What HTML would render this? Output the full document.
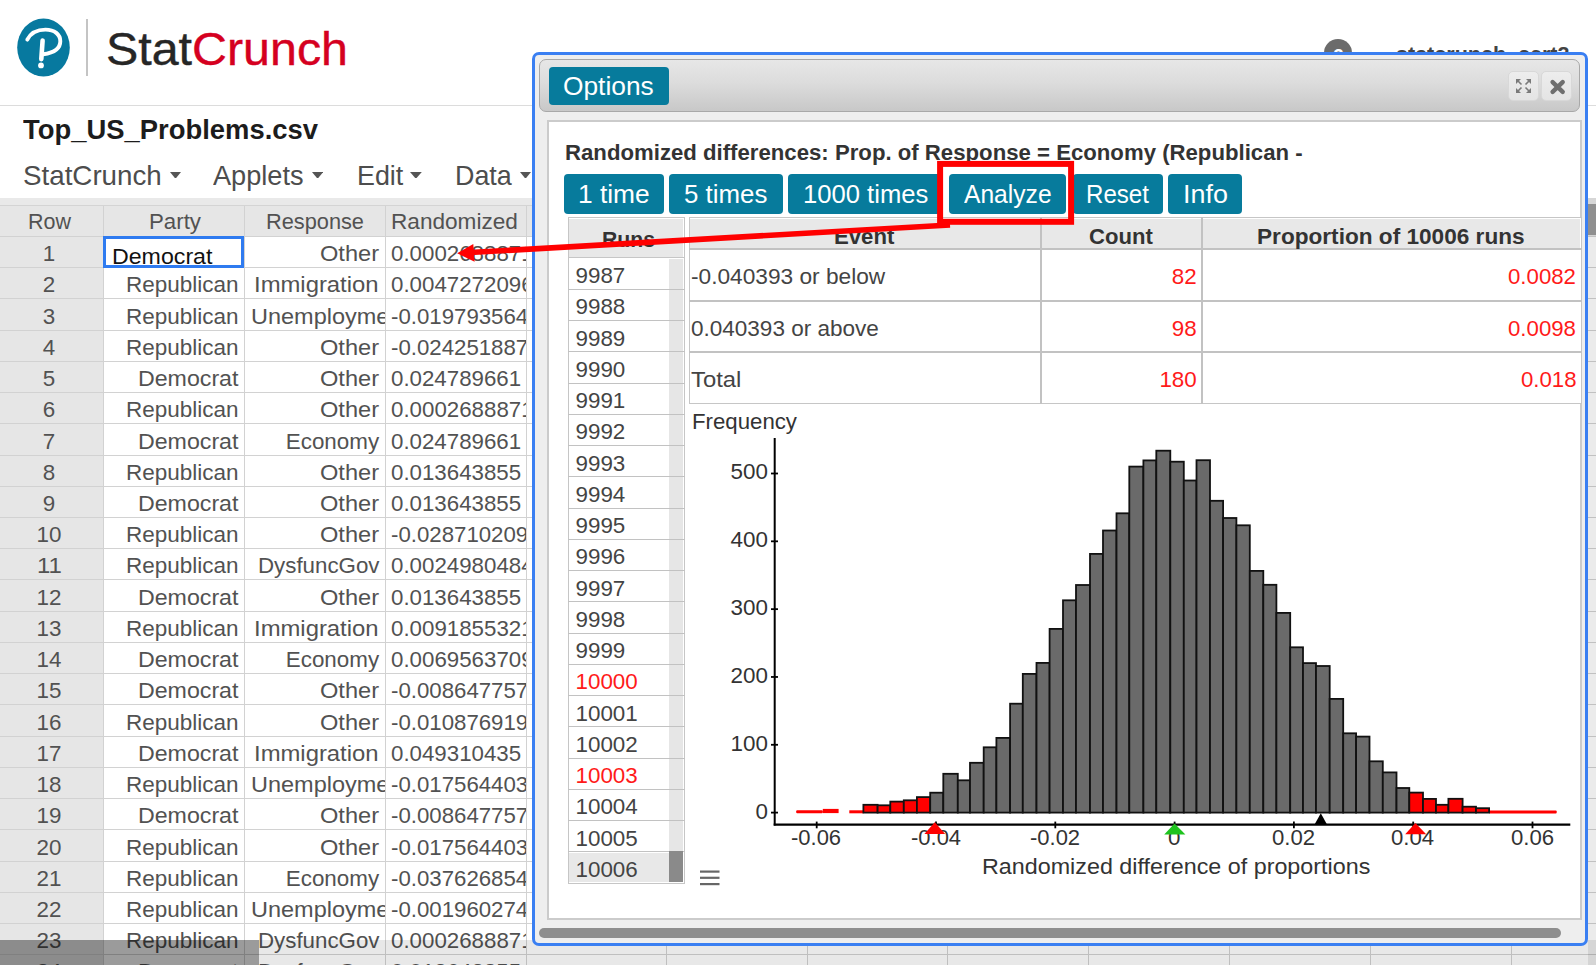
<!DOCTYPE html>
<html><head><meta charset="utf-8"><title>StatCrunch</title>
<style>
html,body{margin:0;padding:0;background:#fff;}
body{width:1596px;height:965px;overflow:hidden;position:relative;font-family:"Liberation Sans",sans-serif;}
.t{position:absolute;white-space:nowrap;line-height:1;}
.b{position:absolute;}
.clip{position:absolute;overflow:hidden;}
</style></head><body>
<svg class="b" style="left:0;top:0" width="100" height="100" viewBox="0 0 100 100">
<ellipse cx="43.5" cy="47.5" rx="26.3" ry="29" fill="#07799f"/>
<path d="M27.3,39.6 C30.5,33.5 37,29.6 45.5,29.6 C54.5,29.6 60.3,34.4 60.3,41.2 C60.3,48.4 53.5,52.8 43.2,54.2" fill="none" stroke="#fff" stroke-width="3.9" stroke-linecap="round"/>
<path d="M42.6,40.6 L41.3,59.2" fill="none" stroke="#fff" stroke-width="4.6" stroke-linecap="round"/>
<circle cx="41" cy="65.4" r="2.9" fill="#fff"/>
</svg>
<div class="b" style="left:86.00px;top:19.00px;width:1.50px;height:57.00px;background:#c4c4c4"></div>
<div class="t" style="left:105.5px;top:25.84px;font-size:46.5px;transform:scaleX(1.0403);transform-origin:0 0;color:#262626;-webkit-text-stroke:0.4px currentColor">Stat<span style="color:#d5001f">Crunch</span></div>
<div class="b" style="left:1324px;top:39px;width:28px;height:28px;border-radius:50%;background:#6b6b6b"></div>
<div class="t " style="left:1332.63px;top:45.42px;font-size:21.0px;color:#fff;font-weight:bold;transform:scaleX(0.8374);transform-origin:0 0;">?</div>
<div class="t " style="left:1395.50px;top:43.42px;font-size:21.0px;color:#444;font-weight:bold;transform:scaleX(1.0251);transform-origin:0 0;">statcrunch_cert2</div>
<div class="b" style="left:0.00px;top:104.80px;width:1596.00px;height:1.20px;background:#dcdcdc"></div>
<div class="t " style="left:22.80px;top:115.80px;font-size:28.0px;color:#1c1c1c;font-weight:bold;transform:scaleX(0.9789);transform-origin:0 0;">Top_US_Problems.csv</div>
<div class="t " style="left:22.80px;top:162.09px;font-size:27.3px;color:#4d4d4d;transform:scaleX(1.0163);transform-origin:0 0;">StatCrunch</div>
<svg class="b" style="left:170.00px;top:171.50px" width="11.00" height="6.80" viewBox="0 0 11.00 6.80"><polygon points="0,0 11.00,0 5.50,6.80" fill="#555"/></svg>
<div class="t " style="left:213.40px;top:162.09px;font-size:27.3px;color:#4d4d4d;transform:scaleX(0.9951);transform-origin:0 0;">Applets</div>
<svg class="b" style="left:312.00px;top:171.50px" width="11.20" height="6.80" viewBox="0 0 11.20 6.80"><polygon points="0,0 11.20,0 5.60,6.80" fill="#555"/></svg>
<div class="t " style="left:357.00px;top:162.09px;font-size:27.3px;color:#4d4d4d;transform:scaleX(0.9846);transform-origin:0 0;">Edit</div>
<svg class="b" style="left:410.00px;top:171.50px" width="11.80" height="6.80" viewBox="0 0 11.80 6.80"><polygon points="0,0 11.80,0 5.90,6.80" fill="#555"/></svg>
<div class="t " style="left:454.80px;top:162.09px;font-size:27.3px;color:#4d4d4d;transform:scaleX(0.9849);transform-origin:0 0;">Data</div>
<svg class="b" style="left:519.50px;top:171.50px" width="11.00" height="6.80" viewBox="0 0 11.00 6.80"><polygon points="0,0 11.00,0 5.50,6.80" fill="#555"/></svg>
<div class="b" style="left:0.00px;top:198.00px;width:1596.00px;height:7.00px;background:#e9e9e9"></div>
<div class="b" style="left:0.00px;top:204.60px;width:1596.00px;height:1.20px;background:#d4d4d4"></div>
<div class="b" style="left:0.00px;top:205.80px;width:1596.00px;height:30.20px;background:#e6e6e6"></div>
<div class="b" style="left:0.00px;top:235.80px;width:1596.00px;height:1.20px;background:#d2d2d2"></div>
<div class="b" style="left:0.00px;top:237.00px;width:1596.00px;height:728.00px;background:#fff"></div>
<div class="b" style="left:0.00px;top:237.00px;width:103.50px;height:728.00px;background:#e6e6e6"></div>
<div class="b" style="left:103.00px;top:205.80px;width:1.00px;height:759.20px;background:#d2d2d2"></div>
<div class="b" style="left:244.00px;top:205.80px;width:1.00px;height:759.20px;background:#d2d2d2"></div>
<div class="b" style="left:385.00px;top:205.80px;width:1.00px;height:759.20px;background:#d2d2d2"></div>
<div class="b" style="left:526.00px;top:205.80px;width:1.00px;height:759.20px;background:#d2d2d2"></div>
<div class="b" style="left:666.00px;top:205.80px;width:1.00px;height:759.20px;background:#d2d2d2"></div>
<div class="b" style="left:807.00px;top:205.80px;width:1.00px;height:759.20px;background:#d2d2d2"></div>
<div class="b" style="left:947.00px;top:205.80px;width:1.00px;height:759.20px;background:#d2d2d2"></div>
<div class="b" style="left:1088.00px;top:205.80px;width:1.00px;height:759.20px;background:#d2d2d2"></div>
<div class="b" style="left:1229.00px;top:205.80px;width:1.00px;height:759.20px;background:#d2d2d2"></div>
<div class="b" style="left:1370.00px;top:205.80px;width:1.00px;height:759.20px;background:#d2d2d2"></div>
<div class="b" style="left:1511.00px;top:205.80px;width:1.00px;height:759.20px;background:#d2d2d2"></div>
<div class="b" style="left:0.00px;top:267.00px;width:1596.00px;height:1.00px;background:#d2d2d2"></div>
<div class="b" style="left:0.00px;top:298.00px;width:1596.00px;height:1.00px;background:#d2d2d2"></div>
<div class="b" style="left:0.00px;top:330.00px;width:1596.00px;height:1.00px;background:#d2d2d2"></div>
<div class="b" style="left:0.00px;top:361.00px;width:1596.00px;height:1.00px;background:#d2d2d2"></div>
<div class="b" style="left:0.00px;top:392.00px;width:1596.00px;height:1.00px;background:#d2d2d2"></div>
<div class="b" style="left:0.00px;top:423.00px;width:1596.00px;height:1.00px;background:#d2d2d2"></div>
<div class="b" style="left:0.00px;top:455.00px;width:1596.00px;height:1.00px;background:#d2d2d2"></div>
<div class="b" style="left:0.00px;top:486.00px;width:1596.00px;height:1.00px;background:#d2d2d2"></div>
<div class="b" style="left:0.00px;top:517.00px;width:1596.00px;height:1.00px;background:#d2d2d2"></div>
<div class="b" style="left:0.00px;top:548.00px;width:1596.00px;height:1.00px;background:#d2d2d2"></div>
<div class="b" style="left:0.00px;top:579.00px;width:1596.00px;height:1.00px;background:#d2d2d2"></div>
<div class="b" style="left:0.00px;top:611.00px;width:1596.00px;height:1.00px;background:#d2d2d2"></div>
<div class="b" style="left:0.00px;top:642.00px;width:1596.00px;height:1.00px;background:#d2d2d2"></div>
<div class="b" style="left:0.00px;top:673.00px;width:1596.00px;height:1.00px;background:#d2d2d2"></div>
<div class="b" style="left:0.00px;top:704.00px;width:1596.00px;height:1.00px;background:#d2d2d2"></div>
<div class="b" style="left:0.00px;top:736.00px;width:1596.00px;height:1.00px;background:#d2d2d2"></div>
<div class="b" style="left:0.00px;top:767.00px;width:1596.00px;height:1.00px;background:#d2d2d2"></div>
<div class="b" style="left:0.00px;top:798.00px;width:1596.00px;height:1.00px;background:#d2d2d2"></div>
<div class="b" style="left:0.00px;top:829.00px;width:1596.00px;height:1.00px;background:#d2d2d2"></div>
<div class="b" style="left:0.00px;top:861.00px;width:1596.00px;height:1.00px;background:#d2d2d2"></div>
<div class="b" style="left:0.00px;top:892.00px;width:1596.00px;height:1.00px;background:#d2d2d2"></div>
<div class="b" style="left:0.00px;top:923.00px;width:1596.00px;height:1.00px;background:#d2d2d2"></div>
<div class="b" style="left:0.00px;top:954.00px;width:1596.00px;height:1.00px;background:#d2d2d2"></div>
<div class="b" style="left:0.00px;top:985.00px;width:1596.00px;height:1.00px;background:#d2d2d2"></div>
<div class="t " style="left:27.50px;top:211.24px;font-size:22.4px;color:#525252;transform:scaleX(0.9586);transform-origin:0 0;">Row</div>
<div class="t " style="left:149.00px;top:211.24px;font-size:22.4px;color:#525252;transform:scaleX(0.9942);transform-origin:0 0;">Party</div>
<div class="t " style="left:265.60px;top:211.24px;font-size:22.4px;color:#525252;transform:scaleX(0.9717);transform-origin:0 0;">Response</div>
<div class="clip" style="left:386px;top:206px;width:139.5px;height:30px">
<div class="t " style="left:5.40px;top:5.24px;font-size:22.4px;color:#525252;transform:scaleX(1.0097);transform-origin:0 0;">Randomized</div>
</div>
<div class="t " style="left:42.78px;top:243.14px;font-size:22.4px;color:#525252;">1</div>
<div class="clip" style="left:245px;top:237.40px;width:140px;height:29.73px">
<div class="t " style="left:74.93px;top:5.74px;font-size:22.4px;color:#525252;transform:scaleX(1.0543);transform-origin:0 0;">Other</div>
</div>
<div class="clip" style="left:386px;top:237.40px;width:139.5px;height:29.73px">
<div class="t " style="left:5.40px;top:5.74px;font-size:22.4px;color:#525252;transform:scaleX(0.9956);transform-origin:0 0;">0.0002688871</div>
</div>
<div class="t " style="left:42.78px;top:274.37px;font-size:22.4px;color:#525252;">2</div>
<div class="t " style="left:126.31px;top:274.37px;font-size:22.4px;color:#525252;transform:scaleX(1.0037);transform-origin:0 0;">Republican</div>
<div class="clip" style="left:245px;top:268.63px;width:140px;height:29.73px">
<div class="t " style="left:9.38px;top:5.74px;font-size:22.4px;color:#525252;transform:scaleX(1.0650);transform-origin:0 0;">Immigration</div>
</div>
<div class="clip" style="left:386px;top:268.63px;width:139.5px;height:29.73px">
<div class="t " style="left:5.40px;top:5.74px;font-size:22.4px;color:#525252;transform:scaleX(0.9956);transform-origin:0 0;">0.0047272096</div>
</div>
<div class="t " style="left:42.78px;top:305.60px;font-size:22.4px;color:#525252;">3</div>
<div class="t " style="left:126.31px;top:305.60px;font-size:22.4px;color:#525252;transform:scaleX(1.0037);transform-origin:0 0;">Republican</div>
<div class="clip" style="left:245px;top:299.86px;width:140px;height:29.73px">
<div class="t " style="left:5.50px;top:5.74px;font-size:22.4px;color:#525252;transform:scaleX(1.0489);transform-origin:0 0;">Unemployment</div>
</div>
<div class="clip" style="left:386px;top:299.86px;width:139.5px;height:29.73px">
<div class="t " style="left:5.40px;top:5.74px;font-size:22.4px;color:#525252;transform:scaleX(0.9927);transform-origin:0 0;">-0.0197935641</div>
</div>
<div class="t " style="left:42.78px;top:336.83px;font-size:22.4px;color:#525252;">4</div>
<div class="t " style="left:126.31px;top:336.83px;font-size:22.4px;color:#525252;transform:scaleX(1.0037);transform-origin:0 0;">Republican</div>
<div class="clip" style="left:245px;top:331.09px;width:140px;height:29.73px">
<div class="t " style="left:74.93px;top:5.74px;font-size:22.4px;color:#525252;transform:scaleX(1.0543);transform-origin:0 0;">Other</div>
</div>
<div class="clip" style="left:386px;top:331.09px;width:139.5px;height:29.73px">
<div class="t " style="left:5.40px;top:5.74px;font-size:22.4px;color:#525252;transform:scaleX(0.9927);transform-origin:0 0;">-0.0242518871</div>
</div>
<div class="t " style="left:42.78px;top:368.06px;font-size:22.4px;color:#525252;">5</div>
<div class="t " style="left:138.34px;top:368.06px;font-size:22.4px;color:#525252;transform:scaleX(1.0347);transform-origin:0 0;">Democrat</div>
<div class="clip" style="left:245px;top:362.32px;width:140px;height:29.73px">
<div class="t " style="left:74.93px;top:5.74px;font-size:22.4px;color:#525252;transform:scaleX(1.0543);transform-origin:0 0;">Other</div>
</div>
<div class="clip" style="left:386px;top:362.32px;width:139.5px;height:29.73px">
<div class="t " style="left:5.40px;top:5.74px;font-size:22.4px;color:#525252;transform:scaleX(0.9953);transform-origin:0 0;">0.024789661</div>
</div>
<div class="t " style="left:42.78px;top:399.29px;font-size:22.4px;color:#525252;">6</div>
<div class="t " style="left:126.31px;top:399.29px;font-size:22.4px;color:#525252;transform:scaleX(1.0037);transform-origin:0 0;">Republican</div>
<div class="clip" style="left:245px;top:393.55px;width:140px;height:29.73px">
<div class="t " style="left:74.93px;top:5.74px;font-size:22.4px;color:#525252;transform:scaleX(1.0543);transform-origin:0 0;">Other</div>
</div>
<div class="clip" style="left:386px;top:393.55px;width:139.5px;height:29.73px">
<div class="t " style="left:5.40px;top:5.74px;font-size:22.4px;color:#525252;transform:scaleX(0.9956);transform-origin:0 0;">0.0002688871</div>
</div>
<div class="t " style="left:42.78px;top:430.52px;font-size:22.4px;color:#525252;">7</div>
<div class="t " style="left:138.34px;top:430.52px;font-size:22.4px;color:#525252;transform:scaleX(1.0347);transform-origin:0 0;">Democrat</div>
<div class="clip" style="left:245px;top:424.78px;width:140px;height:29.73px">
<div class="t " style="left:40.75px;top:5.74px;font-size:22.4px;color:#525252;">Economy</div>
</div>
<div class="clip" style="left:386px;top:424.78px;width:139.5px;height:29.73px">
<div class="t " style="left:5.40px;top:5.74px;font-size:22.4px;color:#525252;transform:scaleX(0.9953);transform-origin:0 0;">0.024789661</div>
</div>
<div class="t " style="left:42.78px;top:461.75px;font-size:22.4px;color:#525252;">8</div>
<div class="t " style="left:126.31px;top:461.75px;font-size:22.4px;color:#525252;transform:scaleX(1.0037);transform-origin:0 0;">Republican</div>
<div class="clip" style="left:245px;top:456.01px;width:140px;height:29.73px">
<div class="t " style="left:74.93px;top:5.74px;font-size:22.4px;color:#525252;transform:scaleX(1.0543);transform-origin:0 0;">Other</div>
</div>
<div class="clip" style="left:386px;top:456.01px;width:139.5px;height:29.73px">
<div class="t " style="left:5.40px;top:5.74px;font-size:22.4px;color:#525252;transform:scaleX(0.9953);transform-origin:0 0;">0.013643855</div>
</div>
<div class="t " style="left:42.78px;top:492.98px;font-size:22.4px;color:#525252;">9</div>
<div class="t " style="left:138.34px;top:492.98px;font-size:22.4px;color:#525252;transform:scaleX(1.0347);transform-origin:0 0;">Democrat</div>
<div class="clip" style="left:245px;top:487.24px;width:140px;height:29.73px">
<div class="t " style="left:74.93px;top:5.74px;font-size:22.4px;color:#525252;transform:scaleX(1.0543);transform-origin:0 0;">Other</div>
</div>
<div class="clip" style="left:386px;top:487.24px;width:139.5px;height:29.73px">
<div class="t " style="left:5.40px;top:5.74px;font-size:22.4px;color:#525252;transform:scaleX(0.9953);transform-origin:0 0;">0.013643855</div>
</div>
<div class="t " style="left:36.56px;top:524.21px;font-size:22.4px;color:#525252;">10</div>
<div class="t " style="left:126.31px;top:524.21px;font-size:22.4px;color:#525252;transform:scaleX(1.0037);transform-origin:0 0;">Republican</div>
<div class="clip" style="left:245px;top:518.47px;width:140px;height:29.73px">
<div class="t " style="left:74.93px;top:5.74px;font-size:22.4px;color:#525252;transform:scaleX(1.0543);transform-origin:0 0;">Other</div>
</div>
<div class="clip" style="left:386px;top:518.47px;width:139.5px;height:29.73px">
<div class="t " style="left:5.40px;top:5.74px;font-size:22.4px;color:#525252;transform:scaleX(0.9927);transform-origin:0 0;">-0.0287102091</div>
</div>
<div class="t " style="left:36.56px;top:555.44px;font-size:22.4px;color:#525252;transform:scaleX(1.0699);transform-origin:0 0;">11</div>
<div class="t " style="left:126.31px;top:555.44px;font-size:22.4px;color:#525252;transform:scaleX(1.0037);transform-origin:0 0;">Republican</div>
<div class="clip" style="left:245px;top:549.70px;width:140px;height:29.73px">
<div class="t " style="left:12.52px;top:5.74px;font-size:22.4px;color:#525252;transform:scaleX(0.9957);transform-origin:0 0;">DysfuncGov</div>
</div>
<div class="clip" style="left:386px;top:549.70px;width:139.5px;height:29.73px">
<div class="t " style="left:5.40px;top:5.74px;font-size:22.4px;color:#525252;transform:scaleX(0.9956);transform-origin:0 0;">0.0024980484</div>
</div>
<div class="t " style="left:36.56px;top:586.67px;font-size:22.4px;color:#525252;">12</div>
<div class="t " style="left:138.34px;top:586.67px;font-size:22.4px;color:#525252;transform:scaleX(1.0347);transform-origin:0 0;">Democrat</div>
<div class="clip" style="left:245px;top:580.93px;width:140px;height:29.73px">
<div class="t " style="left:74.93px;top:5.74px;font-size:22.4px;color:#525252;transform:scaleX(1.0543);transform-origin:0 0;">Other</div>
</div>
<div class="clip" style="left:386px;top:580.93px;width:139.5px;height:29.73px">
<div class="t " style="left:5.40px;top:5.74px;font-size:22.4px;color:#525252;transform:scaleX(0.9953);transform-origin:0 0;">0.013643855</div>
</div>
<div class="t " style="left:36.56px;top:617.90px;font-size:22.4px;color:#525252;">13</div>
<div class="t " style="left:126.31px;top:617.90px;font-size:22.4px;color:#525252;transform:scaleX(1.0037);transform-origin:0 0;">Republican</div>
<div class="clip" style="left:245px;top:612.16px;width:140px;height:29.73px">
<div class="t " style="left:9.38px;top:5.74px;font-size:22.4px;color:#525252;transform:scaleX(1.0650);transform-origin:0 0;">Immigration</div>
</div>
<div class="clip" style="left:386px;top:612.16px;width:139.5px;height:29.73px">
<div class="t " style="left:5.40px;top:5.74px;font-size:22.4px;color:#525252;transform:scaleX(0.9956);transform-origin:0 0;">0.0091855321</div>
</div>
<div class="t " style="left:36.56px;top:649.13px;font-size:22.4px;color:#525252;">14</div>
<div class="t " style="left:138.34px;top:649.13px;font-size:22.4px;color:#525252;transform:scaleX(1.0347);transform-origin:0 0;">Democrat</div>
<div class="clip" style="left:245px;top:643.39px;width:140px;height:29.73px">
<div class="t " style="left:40.75px;top:5.74px;font-size:22.4px;color:#525252;">Economy</div>
</div>
<div class="clip" style="left:386px;top:643.39px;width:139.5px;height:29.73px">
<div class="t " style="left:5.40px;top:5.74px;font-size:22.4px;color:#525252;transform:scaleX(0.9956);transform-origin:0 0;">0.0069563709</div>
</div>
<div class="t " style="left:36.56px;top:680.36px;font-size:22.4px;color:#525252;">15</div>
<div class="t " style="left:138.34px;top:680.36px;font-size:22.4px;color:#525252;transform:scaleX(1.0347);transform-origin:0 0;">Democrat</div>
<div class="clip" style="left:245px;top:674.62px;width:140px;height:29.73px">
<div class="t " style="left:74.93px;top:5.74px;font-size:22.4px;color:#525252;transform:scaleX(1.0543);transform-origin:0 0;">Other</div>
</div>
<div class="clip" style="left:386px;top:674.62px;width:139.5px;height:29.73px">
<div class="t " style="left:5.40px;top:5.74px;font-size:22.4px;color:#525252;transform:scaleX(0.9927);transform-origin:0 0;">-0.0086477571</div>
</div>
<div class="t " style="left:36.56px;top:711.59px;font-size:22.4px;color:#525252;">16</div>
<div class="t " style="left:126.31px;top:711.59px;font-size:22.4px;color:#525252;transform:scaleX(1.0037);transform-origin:0 0;">Republican</div>
<div class="clip" style="left:245px;top:705.85px;width:140px;height:29.73px">
<div class="t " style="left:74.93px;top:5.74px;font-size:22.4px;color:#525252;transform:scaleX(1.0543);transform-origin:0 0;">Other</div>
</div>
<div class="clip" style="left:386px;top:705.85px;width:139.5px;height:29.73px">
<div class="t " style="left:5.40px;top:5.74px;font-size:22.4px;color:#525252;transform:scaleX(0.9927);transform-origin:0 0;">-0.0108769191</div>
</div>
<div class="t " style="left:36.56px;top:742.82px;font-size:22.4px;color:#525252;">17</div>
<div class="t " style="left:138.34px;top:742.82px;font-size:22.4px;color:#525252;transform:scaleX(1.0347);transform-origin:0 0;">Democrat</div>
<div class="clip" style="left:245px;top:737.08px;width:140px;height:29.73px">
<div class="t " style="left:9.38px;top:5.74px;font-size:22.4px;color:#525252;transform:scaleX(1.0650);transform-origin:0 0;">Immigration</div>
</div>
<div class="clip" style="left:386px;top:737.08px;width:139.5px;height:29.73px">
<div class="t " style="left:5.40px;top:5.74px;font-size:22.4px;color:#525252;transform:scaleX(0.9953);transform-origin:0 0;">0.049310435</div>
</div>
<div class="t " style="left:36.56px;top:774.05px;font-size:22.4px;color:#525252;">18</div>
<div class="t " style="left:126.31px;top:774.05px;font-size:22.4px;color:#525252;transform:scaleX(1.0037);transform-origin:0 0;">Republican</div>
<div class="clip" style="left:245px;top:768.31px;width:140px;height:29.73px">
<div class="t " style="left:5.50px;top:5.74px;font-size:22.4px;color:#525252;transform:scaleX(1.0489);transform-origin:0 0;">Unemployment</div>
</div>
<div class="clip" style="left:386px;top:768.31px;width:139.5px;height:29.73px">
<div class="t " style="left:5.40px;top:5.74px;font-size:22.4px;color:#525252;transform:scaleX(0.9927);transform-origin:0 0;">-0.0175644031</div>
</div>
<div class="t " style="left:36.56px;top:805.28px;font-size:22.4px;color:#525252;">19</div>
<div class="t " style="left:138.34px;top:805.28px;font-size:22.4px;color:#525252;transform:scaleX(1.0347);transform-origin:0 0;">Democrat</div>
<div class="clip" style="left:245px;top:799.54px;width:140px;height:29.73px">
<div class="t " style="left:74.93px;top:5.74px;font-size:22.4px;color:#525252;transform:scaleX(1.0543);transform-origin:0 0;">Other</div>
</div>
<div class="clip" style="left:386px;top:799.54px;width:139.5px;height:29.73px">
<div class="t " style="left:5.40px;top:5.74px;font-size:22.4px;color:#525252;transform:scaleX(0.9927);transform-origin:0 0;">-0.0086477571</div>
</div>
<div class="t " style="left:36.56px;top:836.51px;font-size:22.4px;color:#525252;">20</div>
<div class="t " style="left:126.31px;top:836.51px;font-size:22.4px;color:#525252;transform:scaleX(1.0037);transform-origin:0 0;">Republican</div>
<div class="clip" style="left:245px;top:830.77px;width:140px;height:29.73px">
<div class="t " style="left:74.93px;top:5.74px;font-size:22.4px;color:#525252;transform:scaleX(1.0543);transform-origin:0 0;">Other</div>
</div>
<div class="clip" style="left:386px;top:830.77px;width:139.5px;height:29.73px">
<div class="t " style="left:5.40px;top:5.74px;font-size:22.4px;color:#525252;transform:scaleX(0.9927);transform-origin:0 0;">-0.0175644031</div>
</div>
<div class="t " style="left:36.56px;top:867.74px;font-size:22.4px;color:#525252;">21</div>
<div class="t " style="left:126.31px;top:867.74px;font-size:22.4px;color:#525252;transform:scaleX(1.0037);transform-origin:0 0;">Republican</div>
<div class="clip" style="left:245px;top:862.00px;width:140px;height:29.73px">
<div class="t " style="left:40.75px;top:5.74px;font-size:22.4px;color:#525252;">Economy</div>
</div>
<div class="clip" style="left:386px;top:862.00px;width:139.5px;height:29.73px">
<div class="t " style="left:5.40px;top:5.74px;font-size:22.4px;color:#525252;transform:scaleX(0.9927);transform-origin:0 0;">-0.0376268541</div>
</div>
<div class="t " style="left:36.56px;top:898.97px;font-size:22.4px;color:#525252;">22</div>
<div class="t " style="left:126.31px;top:898.97px;font-size:22.4px;color:#525252;transform:scaleX(1.0037);transform-origin:0 0;">Republican</div>
<div class="clip" style="left:245px;top:893.23px;width:140px;height:29.73px">
<div class="t " style="left:5.50px;top:5.74px;font-size:22.4px;color:#525252;transform:scaleX(1.0489);transform-origin:0 0;">Unemployment</div>
</div>
<div class="clip" style="left:386px;top:893.23px;width:139.5px;height:29.73px">
<div class="t " style="left:5.40px;top:5.74px;font-size:22.4px;color:#525252;transform:scaleX(0.9927);transform-origin:0 0;">-0.0019602741</div>
</div>
<div class="t " style="left:36.56px;top:930.20px;font-size:22.4px;color:#525252;">23</div>
<div class="t " style="left:126.31px;top:930.20px;font-size:22.4px;color:#525252;transform:scaleX(1.0037);transform-origin:0 0;">Republican</div>
<div class="clip" style="left:245px;top:924.46px;width:140px;height:29.73px">
<div class="t " style="left:12.52px;top:5.74px;font-size:22.4px;color:#525252;transform:scaleX(0.9957);transform-origin:0 0;">DysfuncGov</div>
</div>
<div class="clip" style="left:386px;top:924.46px;width:139.5px;height:29.73px">
<div class="t " style="left:5.40px;top:5.74px;font-size:22.4px;color:#525252;transform:scaleX(0.9956);transform-origin:0 0;">0.0002688871</div>
</div>
<div class="t " style="left:36.56px;top:961.43px;font-size:22.4px;color:#525252;">24</div>
<div class="t " style="left:138.34px;top:961.43px;font-size:22.4px;color:#525252;transform:scaleX(1.0347);transform-origin:0 0;">Democrat</div>
<div class="clip" style="left:245px;top:955.69px;width:140px;height:29.73px">
<div class="t " style="left:12.52px;top:5.74px;font-size:22.4px;color:#525252;transform:scaleX(0.9957);transform-origin:0 0;">DysfuncGov</div>
</div>
<div class="clip" style="left:386px;top:955.69px;width:139.5px;height:29.73px">
<div class="t " style="left:5.40px;top:5.74px;font-size:22.4px;color:#525252;transform:scaleX(0.9953);transform-origin:0 0;">0.013643855</div>
</div>
<div class="b" style="left:103.20px;top:235.80px;width:140.60px;height:32.10px;border:3px solid #2f7bf0;box-sizing:border-box;background:#fff"></div>
<div class="t " style="left:112.40px;top:245.84px;font-size:22.4px;color:#111;transform:scaleX(1.0347);transform-origin:0 0;">Democrat</div>
<div class="b" style="left:1588.00px;top:198.00px;width:8.00px;height:767.00px;background:rgba(0,0,0,0.08)"></div>
<div class="b" style="left:1588.00px;top:204.40px;width:8.00px;height:31.10px;background:#8f8f8f"></div>
<div class="b" style="left:0.00px;top:940.00px;width:1596.00px;height:25.00px;background:rgba(0,0,0,0.09)"></div>
<div class="b" style="left:0.00px;top:940.00px;width:259.00px;height:25.00px;background:rgba(0,0,0,0.33)"></div>
<div class="b" style="left:531.60px;top:51.50px;width:1056.60px;height:894.30px;border:3.3px solid #3a7ff2;border-radius:7px;box-sizing:border-box;background:#eeeeee"></div>
<div class="b" style="left:539.40px;top:59.40px;width:1041.00px;height:53.00px;border:1px solid #a8a8a8;border-radius:7px;box-sizing:border-box;background:linear-gradient(#e7e7e7,#dcdcdc 45%,#c8c8c8)"></div>
<div class="b" style="left:548.80px;top:67.10px;width:120.30px;height:37.70px;background:#077b9c;border-radius:4px"></div>
<div class="t " style="left:563.40px;top:74.37px;font-size:25.2px;color:#fff;transform:scaleX(1.0452);transform-origin:0 0;">Options</div>
<div class="b" style="left:1508.00px;top:71.00px;width:30.50px;height:29.50px;background:linear-gradient(#ededed,#e4e4e4);border-radius:5px;border:1px solid #d8d8d8;box-sizing:border-box"></div>
<div class="b" style="left:1541.00px;top:71.00px;width:30.50px;height:29.50px;background:linear-gradient(#ededed,#e4e4e4);border-radius:5px;border:1px solid #d8d8d8;box-sizing:border-box"></div>
<svg class="b" style="left:1508px;top:71px" width="31" height="30" viewBox="0 0 31 30">
<g stroke="#7a7a7a" stroke-width="1.6" fill="none">
<path d="M9,9 L13.5,13.5 M17.5,16.5 L22,21 M22,9 L17.5,13.5 M13.5,16.5 L9,21"/>
</g>
<g fill="#7a7a7a">
<polygon points="8,8 13,8 8,13"/><polygon points="23,8 18,8 23,13"/><polygon points="8,22 13,22 8,17"/><polygon points="23,22 18,22 23,17"/>
</g></svg>
<svg class="b" style="left:1541px;top:71px" width="31" height="30" viewBox="0 0 31 30">
<path d="M11.6,11.1 L21.7,20.9 M21.7,11.1 L11.6,20.9" stroke="#6e6e6e" stroke-width="4.4" stroke-linecap="round"/></svg>
<div class="b" style="left:546.80px;top:119.60px;width:1035.40px;height:800.40px;border:2px solid #cbcbcb;box-sizing:border-box;background:#fff"></div>
<div class="b" style="left:539.20px;top:927.70px;width:1021.80px;height:10.20px;background:#8e8e8e;border-radius:5px"></div>
<div class="t " style="left:565.40px;top:142.04px;font-size:22.4px;color:#333;font-weight:bold;transform:scaleX(0.9906);transform-origin:0 0;">Randomized differences: Prop. of Response = Economy (Republican -</div>
<div class="b" style="left:564.40px;top:173.50px;width:99.60px;height:40.10px;background:#077b9c;border-radius:4px"></div>
<div class="t " style="left:578.35px;top:181.87px;font-size:25.2px;color:#fff;transform:scaleX(1.0447);transform-origin:0 0;">1 time</div>
<div class="b" style="left:669.00px;top:173.50px;width:114.00px;height:40.10px;background:#077b9c;border-radius:4px"></div>
<div class="t " style="left:684.31px;top:181.87px;font-size:25.2px;color:#fff;transform:scaleX(1.0264);transform-origin:0 0;">5 times</div>
<div class="b" style="left:788.00px;top:173.50px;width:155.00px;height:40.10px;background:#077b9c;border-radius:4px"></div>
<div class="t " style="left:802.82px;top:181.87px;font-size:25.2px;color:#fff;transform:scaleX(1.0170);transform-origin:0 0;">1000 times</div>
<div class="b" style="left:948.80px;top:173.50px;width:117.20px;height:40.10px;background:#077b9c;border-radius:4px"></div>
<div class="t " style="left:963.57px;top:181.87px;font-size:25.2px;color:#fff;transform:scaleX(0.9777);transform-origin:0 0;">Analyze</div>
<div class="b" style="left:1072.50px;top:173.50px;width:90.30px;height:40.10px;background:#077b9c;border-radius:4px"></div>
<div class="t " style="left:1086.19px;top:181.87px;font-size:25.2px;color:#fff;transform:scaleX(0.9558);transform-origin:0 0;">Reset</div>
<div class="b" style="left:1167.80px;top:173.50px;width:74.50px;height:40.10px;background:#077b9c;border-radius:4px"></div>
<div class="t " style="left:1182.58px;top:181.87px;font-size:25.2px;color:#fff;transform:scaleX(1.0689);transform-origin:0 0;">Info</div>
<div class="b" style="left:567.80px;top:217.40px;width:116.80px;height:666.20px;border:1.6px solid #c6c6c6;box-sizing:border-box;background:#fff"></div>
<div class="b" style="left:569.30px;top:218.90px;width:113.80px;height:38.30px;background:#e8e8e8"></div>
<div class="b" style="left:567.80px;top:256.90px;width:116.80px;height:1.60px;background:#c6c6c6"></div>
<div class="t " style="left:602.16px;top:228.74px;font-size:22.4px;color:#333;font-weight:bold;transform:scaleX(0.9479);transform-origin:0 0;">Runs</div>
<div class="b" style="left:669.20px;top:258.50px;width:13.80px;height:623.50px;background:#e6e6e6"></div>
<div class="t " style="left:575.50px;top:265.24px;font-size:22.4px;color:#444;">9987</div>
<div class="b" style="left:567.80px;top:289.00px;width:116.80px;height:1.00px;background:#c2c2c2"></div>
<div class="t " style="left:575.50px;top:296.49px;font-size:22.4px;color:#444;">9988</div>
<div class="b" style="left:567.80px;top:320.00px;width:116.80px;height:1.00px;background:#c2c2c2"></div>
<div class="t " style="left:575.50px;top:327.74px;font-size:22.4px;color:#444;">9989</div>
<div class="b" style="left:567.80px;top:351.00px;width:116.80px;height:1.00px;background:#c2c2c2"></div>
<div class="t " style="left:575.50px;top:358.99px;font-size:22.4px;color:#444;">9990</div>
<div class="b" style="left:567.80px;top:383.00px;width:116.80px;height:1.00px;background:#c2c2c2"></div>
<div class="t " style="left:575.50px;top:390.24px;font-size:22.4px;color:#444;">9991</div>
<div class="b" style="left:567.80px;top:414.00px;width:116.80px;height:1.00px;background:#c2c2c2"></div>
<div class="t " style="left:575.50px;top:421.49px;font-size:22.4px;color:#444;">9992</div>
<div class="b" style="left:567.80px;top:445.00px;width:116.80px;height:1.00px;background:#c2c2c2"></div>
<div class="t " style="left:575.50px;top:452.74px;font-size:22.4px;color:#444;">9993</div>
<div class="b" style="left:567.80px;top:476.00px;width:116.80px;height:1.00px;background:#c2c2c2"></div>
<div class="t " style="left:575.50px;top:483.99px;font-size:22.4px;color:#444;">9994</div>
<div class="b" style="left:567.80px;top:508.00px;width:116.80px;height:1.00px;background:#c2c2c2"></div>
<div class="t " style="left:575.50px;top:515.24px;font-size:22.4px;color:#444;">9995</div>
<div class="b" style="left:567.80px;top:539.00px;width:116.80px;height:1.00px;background:#c2c2c2"></div>
<div class="t " style="left:575.50px;top:546.49px;font-size:22.4px;color:#444;">9996</div>
<div class="b" style="left:567.80px;top:570.00px;width:116.80px;height:1.00px;background:#c2c2c2"></div>
<div class="t " style="left:575.50px;top:577.74px;font-size:22.4px;color:#444;">9997</div>
<div class="b" style="left:567.80px;top:601.00px;width:116.80px;height:1.00px;background:#c2c2c2"></div>
<div class="t " style="left:575.50px;top:608.99px;font-size:22.4px;color:#444;">9998</div>
<div class="b" style="left:567.80px;top:633.00px;width:116.80px;height:1.00px;background:#c2c2c2"></div>
<div class="t " style="left:575.50px;top:640.24px;font-size:22.4px;color:#444;">9999</div>
<div class="b" style="left:567.80px;top:664.00px;width:116.80px;height:1.00px;background:#c2c2c2"></div>
<div class="t " style="left:575.50px;top:671.49px;font-size:22.4px;color:#ff1a1a;">10000</div>
<div class="b" style="left:567.80px;top:695.00px;width:116.80px;height:1.00px;background:#c2c2c2"></div>
<div class="t " style="left:575.50px;top:702.74px;font-size:22.4px;color:#444;">10001</div>
<div class="b" style="left:567.80px;top:726.00px;width:116.80px;height:1.00px;background:#c2c2c2"></div>
<div class="t " style="left:575.50px;top:733.99px;font-size:22.4px;color:#444;">10002</div>
<div class="b" style="left:567.80px;top:758.00px;width:116.80px;height:1.00px;background:#c2c2c2"></div>
<div class="t " style="left:575.50px;top:765.24px;font-size:22.4px;color:#ff1a1a;">10003</div>
<div class="b" style="left:567.80px;top:789.00px;width:116.80px;height:1.00px;background:#c2c2c2"></div>
<div class="t " style="left:575.50px;top:796.49px;font-size:22.4px;color:#444;">10004</div>
<div class="b" style="left:567.80px;top:820.00px;width:116.80px;height:1.00px;background:#c2c2c2"></div>
<div class="t " style="left:575.50px;top:827.74px;font-size:22.4px;color:#444;">10005</div>
<div class="b" style="left:569.30px;top:852.65px;width:99.90px;height:29.35px;background:#e8e8e8"></div>
<div class="b" style="left:567.80px;top:851.00px;width:116.80px;height:1.00px;background:#c2c2c2"></div>
<div class="t " style="left:575.50px;top:858.99px;font-size:22.4px;color:#444;">10006</div>
<div class="b" style="left:669.20px;top:851.00px;width:13.90px;height:31.20px;background:#8a8a8a"></div>
<div class="b" style="left:688.70px;top:217.30px;width:892.90px;height:187.10px;border:1.6px solid #c6c6c6;box-sizing:border-box;background:#fff"></div>
<div class="b" style="left:690.20px;top:218.80px;width:889.90px;height:29.20px;background:#e8e8e8"></div>
<div class="b" style="left:688.70px;top:248.00px;width:892.90px;height:1.50px;background:#c2c2c2"></div>
<div class="b" style="left:688.70px;top:300.00px;width:892.90px;height:1.50px;background:#c2c2c2"></div>
<div class="b" style="left:688.70px;top:351.00px;width:892.90px;height:1.50px;background:#c2c2c2"></div>
<div class="b" style="left:1040.00px;top:217.30px;width:1.50px;height:187.10px;background:#c2c2c2"></div>
<div class="b" style="left:1201.00px;top:217.30px;width:1.50px;height:187.10px;background:#c2c2c2"></div>
<div class="t " style="left:834.00px;top:225.54px;font-size:22.4px;color:#333;font-weight:bold;transform:scaleX(0.9904);transform-origin:0 0;">Event</div>
<div class="t " style="left:1088.50px;top:225.54px;font-size:22.4px;color:#333;font-weight:bold;transform:scaleX(0.9864);transform-origin:0 0;">Count</div>
<div class="t " style="left:1257.05px;top:225.54px;font-size:22.4px;color:#333;font-weight:bold;transform:scaleX(1.0098);transform-origin:0 0;">Proportion of 10006 runs</div>
<div class="t " style="left:691.40px;top:266.04px;font-size:22.4px;color:#444;transform:scaleX(1.0131);transform-origin:0 0;">-0.040393 or below</div>
<div class="t " style="left:1171.82px;top:266.04px;font-size:22.4px;color:#ff1a1a;">82</div>
<div class="t " style="left:1508.21px;top:266.04px;font-size:22.4px;color:#ff1a1a;transform:scaleX(0.9923);transform-origin:0 0;">0.0082</div>
<div class="t " style="left:691.40px;top:317.54px;font-size:22.4px;color:#444;transform:scaleX(1.0056);transform-origin:0 0;">0.040393 or above</div>
<div class="t " style="left:1171.82px;top:317.54px;font-size:22.4px;color:#ff1a1a;">98</div>
<div class="t " style="left:1508.21px;top:317.54px;font-size:22.4px;color:#ff1a1a;transform:scaleX(0.9923);transform-origin:0 0;">0.0098</div>
<div class="t " style="left:691.40px;top:368.94px;font-size:22.4px;color:#444;transform:scaleX(1.0635);transform-origin:0 0;">Total</div>
<div class="t " style="left:1159.38px;top:368.94px;font-size:22.4px;color:#ff1a1a;">180</div>
<div class="t " style="left:1520.65px;top:368.94px;font-size:22.4px;color:#ff1a1a;transform:scaleX(0.9909);transform-origin:0 0;">0.018</div>
<svg class="b" style="left:0;top:0" width="1596" height="965" viewBox="0 0 1596 965"><g fill="#ff0000"><rect x="796.2" y="810.3" width="26.6" height="3" rx="1"/><rect x="822.8" y="808.9" width="15.8" height="4.2"/><rect x="849.3" y="810.3" width="14.5" height="3"/><rect x="1489" y="810.4" width="67.7" height="3" rx="1"/></g><rect x="863.40" y="804.80" width="14.20" height="7.80" fill="#ff0000" stroke="#111" stroke-width="1.8"/><rect x="877.60" y="805.30" width="12.70" height="7.30" fill="#ff0000" stroke="#111" stroke-width="1.8"/><rect x="890.30" y="801.60" width="13.50" height="11.00" fill="#ff0000" stroke="#111" stroke-width="1.8"/><rect x="903.80" y="800.30" width="13.10" height="12.30" fill="#ff0000" stroke="#111" stroke-width="1.8"/><rect x="916.90" y="797.10" width="13.30" height="15.50" fill="#ff0000" stroke="#111" stroke-width="1.8"/><rect x="930.20" y="792.70" width="13.10" height="19.90" fill="#6a6a6a" stroke="#111" stroke-width="1.8"/><rect x="943.30" y="773.80" width="14.50" height="38.80" fill="#6a6a6a" stroke="#111" stroke-width="1.8"/><rect x="957.80" y="780.30" width="12.20" height="32.30" fill="#6a6a6a" stroke="#111" stroke-width="1.8"/><rect x="970.00" y="762.80" width="13.70" height="49.80" fill="#6a6a6a" stroke="#111" stroke-width="1.8"/><rect x="983.70" y="747.30" width="12.70" height="65.30" fill="#6a6a6a" stroke="#111" stroke-width="1.8"/><rect x="996.40" y="737.90" width="13.70" height="74.70" fill="#6a6a6a" stroke="#111" stroke-width="1.8"/><rect x="1010.10" y="703.70" width="12.70" height="108.90" fill="#6a6a6a" stroke="#111" stroke-width="1.8"/><rect x="1022.80" y="673.90" width="13.70" height="138.70" fill="#6a6a6a" stroke="#111" stroke-width="1.8"/><rect x="1036.50" y="662.90" width="13.10" height="149.70" fill="#6a6a6a" stroke="#111" stroke-width="1.8"/><rect x="1049.60" y="628.90" width="13.40" height="183.70" fill="#6a6a6a" stroke="#111" stroke-width="1.8"/><rect x="1063.00" y="600.30" width="13.00" height="212.30" fill="#6a6a6a" stroke="#111" stroke-width="1.8"/><rect x="1076.00" y="585.00" width="14.00" height="227.60" fill="#6a6a6a" stroke="#111" stroke-width="1.8"/><rect x="1090.00" y="553.90" width="13.00" height="258.70" fill="#6a6a6a" stroke="#111" stroke-width="1.8"/><rect x="1103.00" y="530.50" width="13.50" height="282.10" fill="#6a6a6a" stroke="#111" stroke-width="1.8"/><rect x="1116.50" y="513.30" width="12.80" height="299.30" fill="#6a6a6a" stroke="#111" stroke-width="1.8"/><rect x="1129.30" y="466.60" width="14.10" height="346.00" fill="#6a6a6a" stroke="#111" stroke-width="1.8"/><rect x="1143.40" y="460.40" width="12.90" height="352.20" fill="#6a6a6a" stroke="#111" stroke-width="1.8"/><rect x="1156.30" y="450.70" width="14.00" height="361.90" fill="#6a6a6a" stroke="#111" stroke-width="1.8"/><rect x="1170.30" y="461.70" width="13.50" height="350.90" fill="#6a6a6a" stroke="#111" stroke-width="1.8"/><rect x="1183.80" y="480.50" width="12.70" height="332.10" fill="#6a6a6a" stroke="#111" stroke-width="1.8"/><rect x="1196.50" y="460.20" width="13.50" height="352.40" fill="#6a6a6a" stroke="#111" stroke-width="1.8"/><rect x="1210.00" y="500.80" width="13.10" height="311.80" fill="#6a6a6a" stroke="#111" stroke-width="1.8"/><rect x="1223.10" y="518.00" width="13.30" height="294.60" fill="#6a6a6a" stroke="#111" stroke-width="1.8"/><rect x="1236.40" y="525.30" width="13.40" height="287.30" fill="#6a6a6a" stroke="#111" stroke-width="1.8"/><rect x="1249.80" y="570.90" width="13.50" height="241.70" fill="#6a6a6a" stroke="#111" stroke-width="1.8"/><rect x="1263.30" y="584.80" width="13.10" height="227.80" fill="#6a6a6a" stroke="#111" stroke-width="1.8"/><rect x="1276.40" y="612.90" width="13.80" height="199.70" fill="#6a6a6a" stroke="#111" stroke-width="1.8"/><rect x="1290.20" y="647.30" width="12.80" height="165.30" fill="#6a6a6a" stroke="#111" stroke-width="1.8"/><rect x="1303.00" y="663.10" width="13.00" height="149.50" fill="#6a6a6a" stroke="#111" stroke-width="1.8"/><rect x="1316.00" y="666.00" width="13.70" height="146.60" fill="#6a6a6a" stroke="#111" stroke-width="1.8"/><rect x="1329.70" y="698.90" width="13.50" height="113.70" fill="#6a6a6a" stroke="#111" stroke-width="1.8"/><rect x="1343.20" y="733.30" width="12.90" height="79.30" fill="#6a6a6a" stroke="#111" stroke-width="1.8"/><rect x="1356.10" y="736.60" width="13.40" height="76.00" fill="#6a6a6a" stroke="#111" stroke-width="1.8"/><rect x="1369.50" y="761.30" width="13.30" height="51.30" fill="#6a6a6a" stroke="#111" stroke-width="1.8"/><rect x="1382.80" y="772.40" width="13.70" height="40.20" fill="#6a6a6a" stroke="#111" stroke-width="1.8"/><rect x="1396.50" y="788.00" width="12.80" height="24.60" fill="#6a6a6a" stroke="#111" stroke-width="1.8"/><rect x="1409.30" y="792.60" width="13.70" height="20.00" fill="#ff0000" stroke="#111" stroke-width="1.8"/><rect x="1423.00" y="798.90" width="13.00" height="13.70" fill="#ff0000" stroke="#111" stroke-width="1.8"/><rect x="1436.00" y="804.80" width="12.40" height="7.80" fill="#ff0000" stroke="#111" stroke-width="1.8"/><rect x="1448.40" y="798.80" width="14.20" height="13.80" fill="#ff0000" stroke="#111" stroke-width="1.8"/><rect x="1462.60" y="806.70" width="13.40" height="5.90" fill="#ff0000" stroke="#111" stroke-width="1.8"/><rect x="1476.00" y="808.20" width="13.10" height="4.40" fill="#ff0000" stroke="#111" stroke-width="1.8"/><line x1="774.7" y1="438" x2="774.7" y2="825.5" stroke="#000" stroke-width="2"/><line x1="773.7" y1="824.6" x2="1570.3" y2="824.6" stroke="#000" stroke-width="2.2"/><line x1="771" y1="812.60" x2="778" y2="812.60" stroke="#000" stroke-width="1.8"/><line x1="771" y1="744.78" x2="778" y2="744.78" stroke="#000" stroke-width="1.8"/><line x1="771" y1="676.96" x2="778" y2="676.96" stroke="#000" stroke-width="1.8"/><line x1="771" y1="609.14" x2="778" y2="609.14" stroke="#000" stroke-width="1.8"/><line x1="771" y1="541.32" x2="778" y2="541.32" stroke="#000" stroke-width="1.8"/><line x1="771" y1="473.50" x2="778" y2="473.50" stroke="#000" stroke-width="1.8"/><line x1="816.70" y1="821.6" x2="816.70" y2="828.3" stroke="#000" stroke-width="1.8"/><line x1="936.00" y1="821.6" x2="936.00" y2="828.3" stroke="#000" stroke-width="1.8"/><line x1="1055.30" y1="821.6" x2="1055.30" y2="828.3" stroke="#000" stroke-width="1.8"/><line x1="1174.60" y1="821.6" x2="1174.60" y2="828.3" stroke="#000" stroke-width="1.8"/><line x1="1293.90" y1="821.6" x2="1293.90" y2="828.3" stroke="#000" stroke-width="1.8"/><line x1="1413.20" y1="821.6" x2="1413.20" y2="828.3" stroke="#000" stroke-width="1.8"/><line x1="1532.50" y1="821.6" x2="1532.50" y2="828.3" stroke="#000" stroke-width="1.8"/></svg>
<div class="t " style="left:691.70px;top:411.24px;font-size:22.4px;color:#333;transform:scaleX(0.9921);transform-origin:0 0;">Frequency</div>
<div class="t " style="left:755.46px;top:800.54px;font-size:22.4px;color:#333;">0</div>
<div class="t " style="left:730.58px;top:732.72px;font-size:22.4px;color:#333;">100</div>
<div class="t " style="left:730.58px;top:664.90px;font-size:22.4px;color:#333;">200</div>
<div class="t " style="left:730.58px;top:597.08px;font-size:22.4px;color:#333;">300</div>
<div class="t " style="left:730.58px;top:529.26px;font-size:22.4px;color:#333;">400</div>
<div class="t " style="left:730.58px;top:461.44px;font-size:22.4px;color:#333;">500</div>
<div class="t " style="left:791.34px;top:826.74px;font-size:22.4px;color:#333;transform:scaleX(0.9814);transform-origin:0 0;">-0.06</div>
<div class="t " style="left:910.64px;top:826.74px;font-size:22.4px;color:#333;transform:scaleX(0.9814);transform-origin:0 0;">-0.04</div>
<div class="t " style="left:1029.94px;top:826.74px;font-size:22.4px;color:#333;transform:scaleX(0.9814);transform-origin:0 0;">-0.02</div>
<div class="t " style="left:1168.08px;top:826.74px;font-size:22.4px;color:#333;">0</div>
<div class="t " style="left:1272.05px;top:826.74px;font-size:22.4px;color:#333;transform:scaleX(0.9888);transform-origin:0 0;">0.02</div>
<div class="t " style="left:1391.35px;top:826.74px;font-size:22.4px;color:#333;transform:scaleX(0.9888);transform-origin:0 0;">0.04</div>
<div class="t " style="left:1510.65px;top:826.74px;font-size:22.4px;color:#333;transform:scaleX(0.9888);transform-origin:0 0;">0.06</div>
<div class="t " style="left:982.25px;top:856.24px;font-size:22.4px;color:#333;transform:scaleX(1.0410);transform-origin:0 0;">Randomized difference of proportions</div>
<svg class="b" style="left:0;top:0" width="1596" height="965" viewBox="0 0 1596 965">
<polygon points="934.8,822.3 924.4,834 945.2,834" fill="#ff0000"/>
<polygon points="1415.4,823 1405.2,834.3 1426.2,834.3" fill="#ff0000"/>
<polygon points="1174.5,823.5 1164.2,834.5 1185.4,834.5" fill="#1ec31e"/>
<polygon points="1320.8,813.2 1314.3,825 1327.3,825" fill="#000"/>
</svg>
<svg class="b" style="left:700px;top:869px" width="20" height="17" viewBox="0 0 20 17">
<g fill="#666"><rect x="0" y="1.5" width="19.5" height="2.2"/><rect x="0" y="7.7" width="19.5" height="2.2"/><rect x="0" y="14" width="19.5" height="2.2"/></g></svg>
<svg class="b" style="left:0;top:0;z-index:50" width="1596" height="965" viewBox="0 0 1596 965">
<rect x="940.1" y="163.9" width="131" height="57.9" fill="none" stroke="#ff0000" stroke-width="6"/>
<line x1="950" y1="225" x2="470" y2="252.5" stroke="#ff0000" stroke-width="5.6"/>
<polygon points="457.1,253.3 473.3,244.1 474.6,261.7" fill="#ff0000"/>
</svg>
</body></html>
